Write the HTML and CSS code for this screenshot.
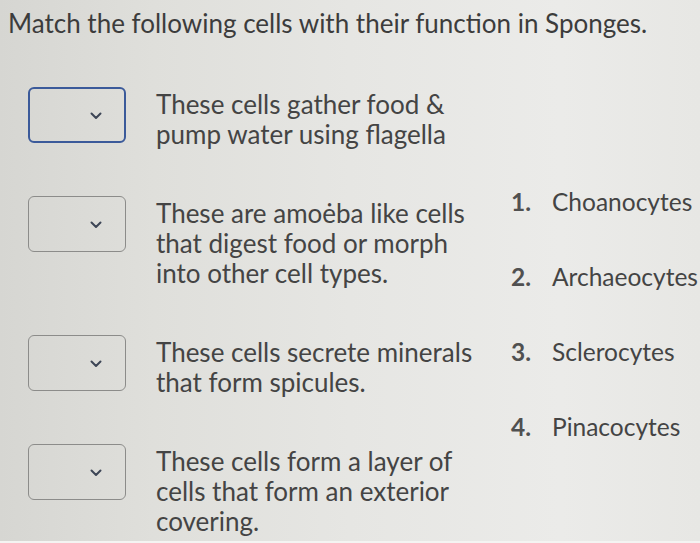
FILE: index.html
```html
<!DOCTYPE html>
<html>
<head>
<meta charset="utf-8">
<link rel="stylesheet" href="styles.css">
</head>
<body>
<div class="page">
  <h1 class="title">Match the following cells with their function in Sponges.</h1>
  <div class="content">
    <div class="prompts">
      <div class="item item-1">
        <div class="select active"><svg class="chev" viewBox="0 0 12 8" width="12" height="8"><path d="M1.5 1.5 L6 6 L10.5 1.5" fill="none" stroke="#3d4656" stroke-width="2" stroke-linecap="round" stroke-linejoin="round"/></svg></div>
        <p class="text">These cells gather food &amp;<br>pump water using flagella</p>
      </div>
      <div class="item item-2">
        <div class="select"><svg class="chev" viewBox="0 0 12 8" width="12" height="8"><path d="M1.5 1.5 L6 6 L10.5 1.5" fill="none" stroke="#3d4656" stroke-width="2" stroke-linecap="round" stroke-linejoin="round"/></svg></div>
        <p class="text">These are amoėba like cells<br>that digest food or morph<br>into other cell types.</p>
      </div>
      <div class="item item-3">
        <div class="select"><svg class="chev" viewBox="0 0 12 8" width="12" height="8"><path d="M1.5 1.5 L6 6 L10.5 1.5" fill="none" stroke="#3d4656" stroke-width="2" stroke-linecap="round" stroke-linejoin="round"/></svg></div>
        <p class="text">These cells secrete minerals<br>that form spicules.</p>
      </div>
      <div class="item item-4">
        <div class="select"><svg class="chev" viewBox="0 0 12 8" width="12" height="8"><path d="M1.5 1.5 L6 6 L10.5 1.5" fill="none" stroke="#3d4656" stroke-width="2" stroke-linecap="round" stroke-linejoin="round"/></svg></div>
        <p class="text">These cells form a layer of<br>cells that form an exterior<br>covering.</p>
      </div>
    </div>
    <ol class="answers">
      <li><span class="num">1.</span><span class="name">Choanocytes</span></li>
      <li><span class="num">2.</span><span class="name">Archaeocytes</span></li>
      <li><span class="num">3.</span><span class="name">Sclerocytes</span></li>
      <li><span class="num">4.</span><span class="name">Pinacocytes</span></li>
    </ol>
  </div>
</div>
<div class="bottom-edge"></div>
</body>
</html>
```

FILE: styles.css
```css
html, body {
  margin: 0;
  padding: 0;
  height: 100%;
}
body {
  width: 700px;
  height: 543px;
  overflow: hidden;
  position: relative;
  font-family: Lato, "Open Sans", sans-serif;
  color: #474747;
  background: linear-gradient(90deg, #d6d6d2 0%, #dfdfdb 22%, #e6e6e3 50%, #ebebe9 80%, #e7e7e4 100%);
}
.page {
  padding: 8px 0 0 8px;
}
.title {
  margin: 0;
  font-size: 26px;
  font-weight: 400;
  line-height: 30px;
  color: #3c3c3c;
}
.content {
  display: flex;
}
.prompts {
  display: flex;
  flex-direction: column;
  padding-left: 20px;
  width: 476px;
  flex-shrink: 0;
}
.item {
  display: flex;
  align-items: flex-start;
  gap: 30px;
}
.item-1 { margin-top: 49px; }
.item-2 { margin-top: 47px; }
.item-3 { margin-top: 47px; }
.item-4 { margin-top: 47px; }
.select {
  box-sizing: border-box;
  width: 98px;
  height: 56px;
  border: 1.5px solid #8c8c8a;
  border-radius: 6px;
  display: flex;
  align-items: center;
  justify-content: flex-end;
  padding-right: 23px;
  flex-shrink: 0;
}
.select.active {
  border: 2.5px solid #3b5a9a;
  padding-right: 22px;
}
.chev {
  display: block;
  margin-top: 2px;
}
.text {
  margin: 2px 0 0 0;
  font-size: 26px;
  line-height: 30px;
  color: #444;
  white-space: nowrap;
}
.answers {
  list-style: none;
  margin: 0;
  padding: 149px 0 0 7px;
  display: flex;
  flex-direction: column;
  gap: 45px;
}
.answers li {
  display: flex;
  font-size: 24.5px;
  line-height: 30px;
  white-space: nowrap;
}
.num {
  width: 41px;
  font-weight: 700;
  color: #505050;
}
.name {
  color: #444;
}
.bottom-edge {
  position: absolute;
  left: 0;
  right: 0;
  bottom: 0;
  height: 2px;
  background: #f4f4f2;
}
```
